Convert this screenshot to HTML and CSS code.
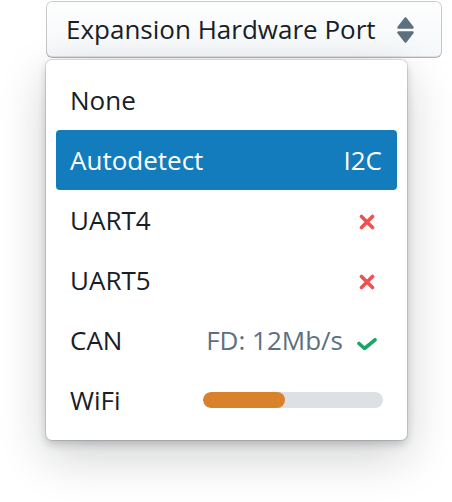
FILE: index.html
```html
<!DOCTYPE html>
<html>
<head>
<meta charset="utf-8">
<link rel="stylesheet" href="styles.css">
</head>
<body>
<div class="wrap">
  <div class="select">
    <span class="select-text">Expansion Hardware Port</span>
    <svg class="caret" width="17" height="26" viewBox="0 0 17 26">
      <polygon points="8.5,1.5 15.5,10.5 1.5,10.5" />
      <polygon points="1.5,15.5 15.5,15.5 8.5,24.5" />
    </svg>
  </div>
  <div class="menu">
    <div class="item"><span>None</span></div>
    <div class="item active"><span>Autodetect</span><span class="label">I2C</span></div>
    <div class="item"><span>UART4</span>
      <svg class="cross" width="16" height="16" viewBox="0 0 16 16"><path d="M2.5 2.5L13.5 13.5M13.5 2.5L2.5 13.5"/></svg>
    </div>
    <div class="item"><span>UART5</span>
      <svg class="cross" width="16" height="16" viewBox="0 0 16 16"><path d="M2.5 2.5L13.5 13.5M13.5 2.5L2.5 13.5"/></svg>
    </div>
    <div class="item"><span>CAN</span>
      <span class="right"><span class="muted">FD: 12Mb/s</span>
        <svg class="tick" width="20" height="12" viewBox="0 0 20 12"><path d="M2 5.5L7.5 10.5L18 1.8"/></svg>
      </span>
    </div>
    <div class="item"><span>WiFi</span>
      <div class="bar"><div class="fill" style="width:45.5%"></div></div>
    </div>
  </div>
</div>
</body>
</html>
```

FILE: styles.css
```css
html, body {
  margin: 0;
  padding: 0;
  background: #ffffff;
}
body {
  font-family: "Open Sans", "Noto Sans", sans-serif;
  font-size: 26px;
  color: #182026;
}
.wrap {
  padding: 1px 0 62px 46px;
  min-height: 439px;
}
.select {
  box-sizing: border-box;
  width: 396px;
  height: 57px;
  display: flex;
  align-items: center;
  justify-content: space-between;
  padding: 0 28px 0 20px;
  border-radius: 6px;
  background-color: #f5f8fa;
  background-image: linear-gradient(to bottom, rgba(255,255,255,0.8), rgba(255,255,255,0));
  box-shadow: inset 0 0 0 1px rgba(16,22,26,0.22), inset 0 -2px 0 rgba(16,22,26,0.1);
}
.select-text {
  line-height: 1;
  margin-top: -1px;
}
.caret {
  fill: #5c7080;
  stroke: #5c7080;
  stroke-width: 2.5;
  stroke-linejoin: round;
  margin-top: 1px;
}
.menu {
  box-sizing: border-box;
  margin-top: 2px;
  width: 361px;
  padding: 10px;
  background: #ffffff;
  border-radius: 6px;
  box-shadow: 0 0 0 1px rgba(16,22,26,0.12), 0 4px 8px rgba(16,22,26,0.2), 0 16px 48px rgba(16,22,26,0.2);
}
.item {
  height: 60px;
  display: flex;
  align-items: center;
  justify-content: space-between;
  padding: 0 14px;
  border-radius: 4px;
}
.item.active {
  background: #137cbd;
  color: #ffffff;
}
.label {
  margin-right: 1px;
}
.cross {
  fill: none;
  stroke: #f05050;
  stroke-width: 3.6;
  stroke-linecap: round;
  margin-right: 8px;
  margin-top: 4px;
}
.right {
  display: flex;
  align-items: center;
}
.muted {
  color: #5c7080;
}
.tick {
  fill: none;
  stroke: #15a862;
  stroke-width: 3.6;
  stroke-linecap: round;
  stroke-linejoin: round;
  margin-left: 14px;
  margin-right: 6px;
  margin-top: 7px;
}
.bar {
  width: 180px;
  height: 16px;
  border-radius: 8px;
  background: #dde1e5;
  overflow: hidden;
}
.fill {
  height: 100%;
  background: #d9822b;
  border-radius: 8px;
}
```
